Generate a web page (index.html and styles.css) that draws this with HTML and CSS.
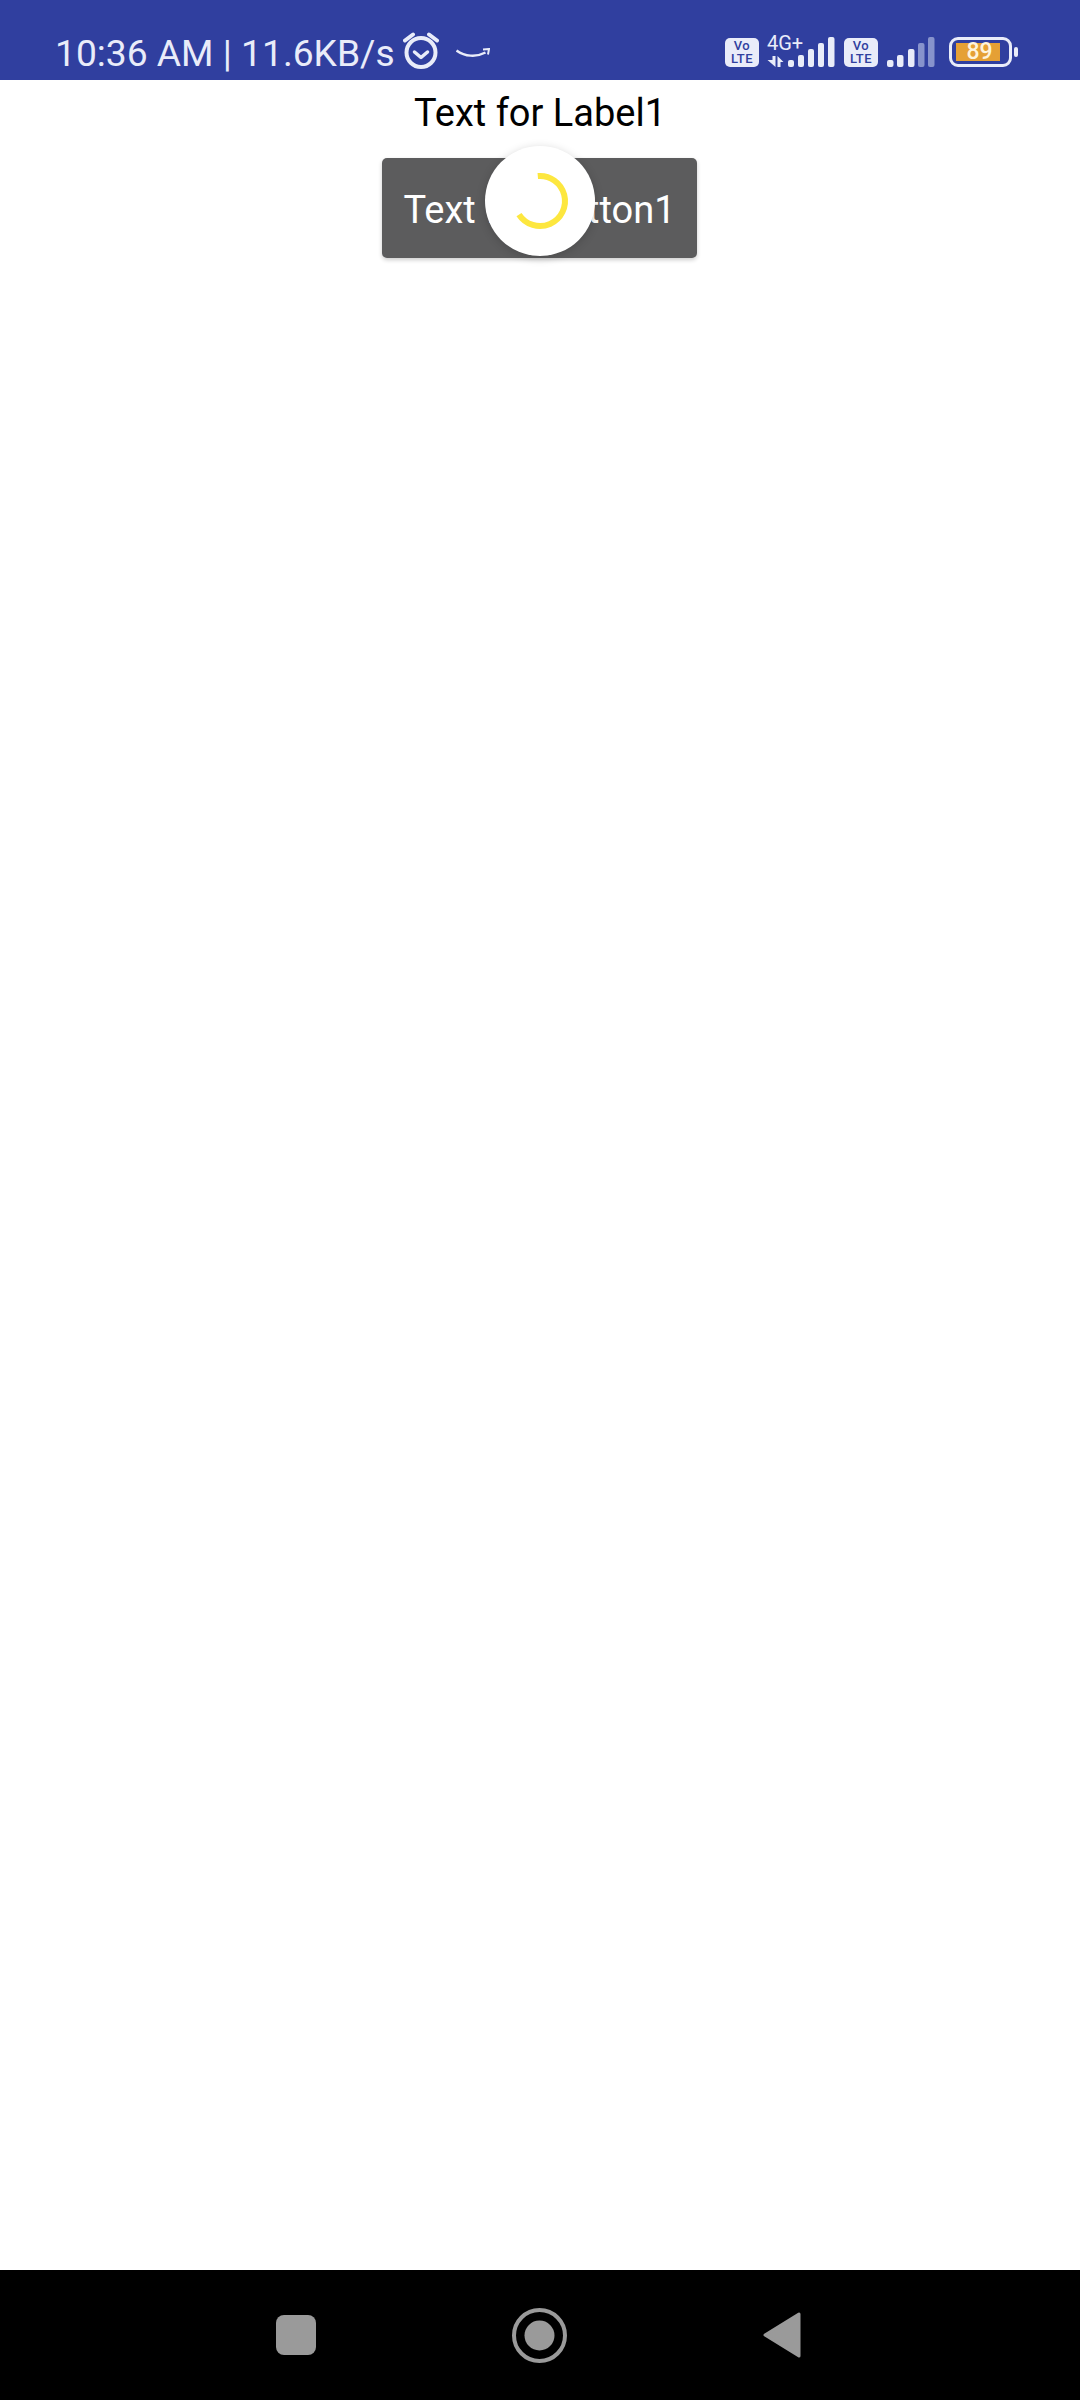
FILE: index.html
```html
<!DOCTYPE html>
<html lang="en">
<head>
    <meta charset="UTF-8">
    <meta name="viewport" content="width=device-width, initial-scale=1.0">
    <title>Label and Button</title>
    <link rel="stylesheet" href="styles.css">
</head>
<body>
    <div class="screen">
        <header class="status-bar">
            <span class="status-time">10:36 AM | 11.6KB/s</span>
            <svg class="icon-alarm" width="36" height="37" viewBox="0 0 36 37">
                <circle cx="18" cy="20.5" r="14.5" fill="none" stroke="#e9ecf9" stroke-width="4"/>
                <path d="M11.5 20 L18 25.5 L24.5 20" fill="none" stroke="#e9ecf9" stroke-width="3.5" stroke-linecap="round" stroke-linejoin="round"/>
                <path d="M2 8.5 L10 2.5 M34 8.5 L26 2.5" fill="none" stroke="#e9ecf9" stroke-width="4" stroke-linecap="round"/>
            </svg>
            <svg class="icon-smile" width="34" height="10" viewBox="0 0 34 10">
                <path d="M0.5 2.5 C9 8.5 20 9.5 29.5 4.5" fill="none" stroke="#e9ecf9" stroke-width="2.5"/>
                <path d="M27 1.5 L33 1 L32 6.5" fill="none" stroke="#e9ecf9" stroke-width="2"/>
            </svg>
            <div class="status-right">
                <div class="volte"><span>Vo</span><span>LTE</span></div>
                <svg class="icon-net" width="68" height="32" viewBox="0 0 68 32">
                    <text class="net-label" x="0" y="14.5">4G+</text>
                    <path d="M0.5 25 H5.500 V21 H8.500 V32 Z M10.500 32 V21 L16.500 27 H13.500 V32 Z" fill="#e9ecf9"/>
                    <rect x="21" y="25" width="6" height="7" rx="2" fill="#e9ecf9"/>
                    <rect x="31" y="20" width="6" height="12" rx="2" fill="#e9ecf9"/>
                    <rect x="41" y="14" width="6" height="18" rx="2" fill="#e9ecf9"/>
                    <rect x="51" y="8" width="6" height="24" rx="2" fill="#e9ecf9"/>
                    <rect x="61" y="2" width="6.500" height="30" rx="2" fill="#e9ecf9"/>
                </svg>
                <div class="volte volte-second"><span>Vo</span><span>LTE</span></div>
                <svg class="icon-signal" width="48" height="30" viewBox="0 0 48 30">
                    <rect x="0" y="23" width="6.500" height="7" rx="2" fill="#e9ecf9"/>
                    <rect x="10" y="18" width="6.500" height="12" rx="2" fill="#e9ecf9"/>
                    <rect x="21" y="12" width="6.500" height="18" rx="2" fill="#e9ecf9"/>
                    <rect x="31" y="6" width="6.500" height="24" rx="2" fill="#8793cc"/>
                    <rect x="41" y="0" width="6.500" height="30" rx="2" fill="#8793cc"/>
                </svg>
                <div class="battery">
                    <div class="battery-level">89</div>
                </div>
                <div class="battery-nub"></div>
            </div>
        </header>

        <main class="content">
            <div class="label">Text for Label1</div>
            <button class="button">Text for Button1</button>
            <div class="spinner">
                <svg width="110" height="110" viewBox="0 0 110 110">
                    <path d="M52.8 30.100 A25 25 0 1 1 34 68.600" fill="none" stroke="#fde73f" stroke-width="6"/>
                </svg>
            </div>
        </main>

        <nav class="nav-bar">
            <div class="nav-recent"></div>
            <svg class="nav-home" width="55" height="55" viewBox="0 0 55 55">
                <circle cx="27.500" cy="27.500" r="25.500" fill="none" stroke="#9a9a9a" stroke-width="4"/>
                <circle cx="27.500" cy="27.500" r="15" fill="#9a9a9a"/>
            </svg>
            <svg class="nav-back" width="38" height="46" viewBox="0 0 38 46">
                <path d="M36 2 V44 L2 23 Z" fill="#9a9a9a" stroke="#9a9a9a" stroke-width="3" stroke-linejoin="round"/>
            </svg>
        </nav>
    </div>
</body>
</html>
```
FILE: styles.css
```css
* {
    box-sizing: border-box;
}

body {
    margin: 0;
    padding: 0;
    background: #fff;
    font-family: Roboto, Arial, sans-serif;
}

.screen {
    display: flex;
    flex-direction: column;
    width: 1080px;
    height: 2400px;
    overflow: hidden;
}

.status-bar {
    display: flex;
    align-items: flex-end;
    flex-shrink: 0;
    height: 80px;
    padding: 0 62px 5px 55px;
    background-color: #303f9f;
    color: #e9ecf9;
}

.status-time {
    font-size: 37.200px;
    line-height: 44px;
}

.icon-alarm {
    margin-left: 8px;
    margin-bottom: 6px;
}

.icon-smile {
    margin-left: 17px;
    margin-bottom: 17px;
}

.status-right {
    display: flex;
    align-items: flex-end;
    margin-left: auto;
    margin-bottom: 8px;
}

.volte {
    display: flex;
    flex-direction: column;
    align-items: center;
    justify-content: center;
    width: 34px;
    height: 29px;
    margin-right: 8px;
    border-radius: 5px;
    background-color: #e9ecf9;
    color: #303f9f;
    font-size: 13px;
    font-weight: 500;
    letter-spacing: 0.5px;
    line-height: 12.500px;
}

.net-label {
    font-family: Roboto, Arial, sans-serif;
    font-size: 20px;
    fill: #e9ecf9;
}

.icon-net {
    margin-right: 9px;
    overflow: visible;
}

.volte-second {
    margin-right: 9px;
}

.icon-signal {
    margin-right: 14px;
}

.battery {
    width: 63px;
    height: 30px;
    padding: 3px 4px;
    border: 3px solid #e9ecf9;
    border-radius: 9px;
}

.battery-level {
    width: 44px;
    height: 18px;
    padding-left: 3px;
    background-color: #e5a035;
    color: #fdf3dc;
    font-size: 23px;
    font-weight: 500;
    line-height: 18px;
    text-align: center;
}

.battery-nub {
    width: 4px;
    height: 10px;
    margin-left: 2px;
    margin-bottom: 10px;
    border-radius: 2px;
    background-color: #e9ecf9;
}

.content {
    position: relative;
    display: flex;
    flex: 1;
    flex-direction: column;
    align-items: center;
    background: #fff;
}

.label {
    margin-top: 11px;
    color: #000;
    font-size: 38px;
    line-height: 44px;
}

.button {
    width: 315px;
    height: 100px;
    margin-top: 23px;
    margin-right: 1px;
    padding: 4px 0 0;
    border: none;
    border-radius: 5px;
    background-color: #5c5c5d;
    box-shadow: 0 2px 4px rgba(0, 0, 0, 0.2);
    color: #fff;
    font-family: Roboto, Arial, sans-serif;
    font-size: 38px;
}

.spinner {
    position: absolute;
    top: 66px;
    left: 485px;
    width: 110px;
    height: 110px;
    border-radius: 50%;
    background: #fff;
    box-shadow: 0 2px 10px rgba(0, 0, 0, 0.18);
}

.spinner svg {
    display: block;
}

.nav-bar {
    display: flex;
    align-items: center;
    flex-shrink: 0;
    gap: 196px;
    height: 130px;
    padding-left: 276px;
    background-color: #000;
}

.nav-recent {
    width: 40px;
    height: 40px;
    border-radius: 8px;
    background-color: #9a9a9a;
}
```
